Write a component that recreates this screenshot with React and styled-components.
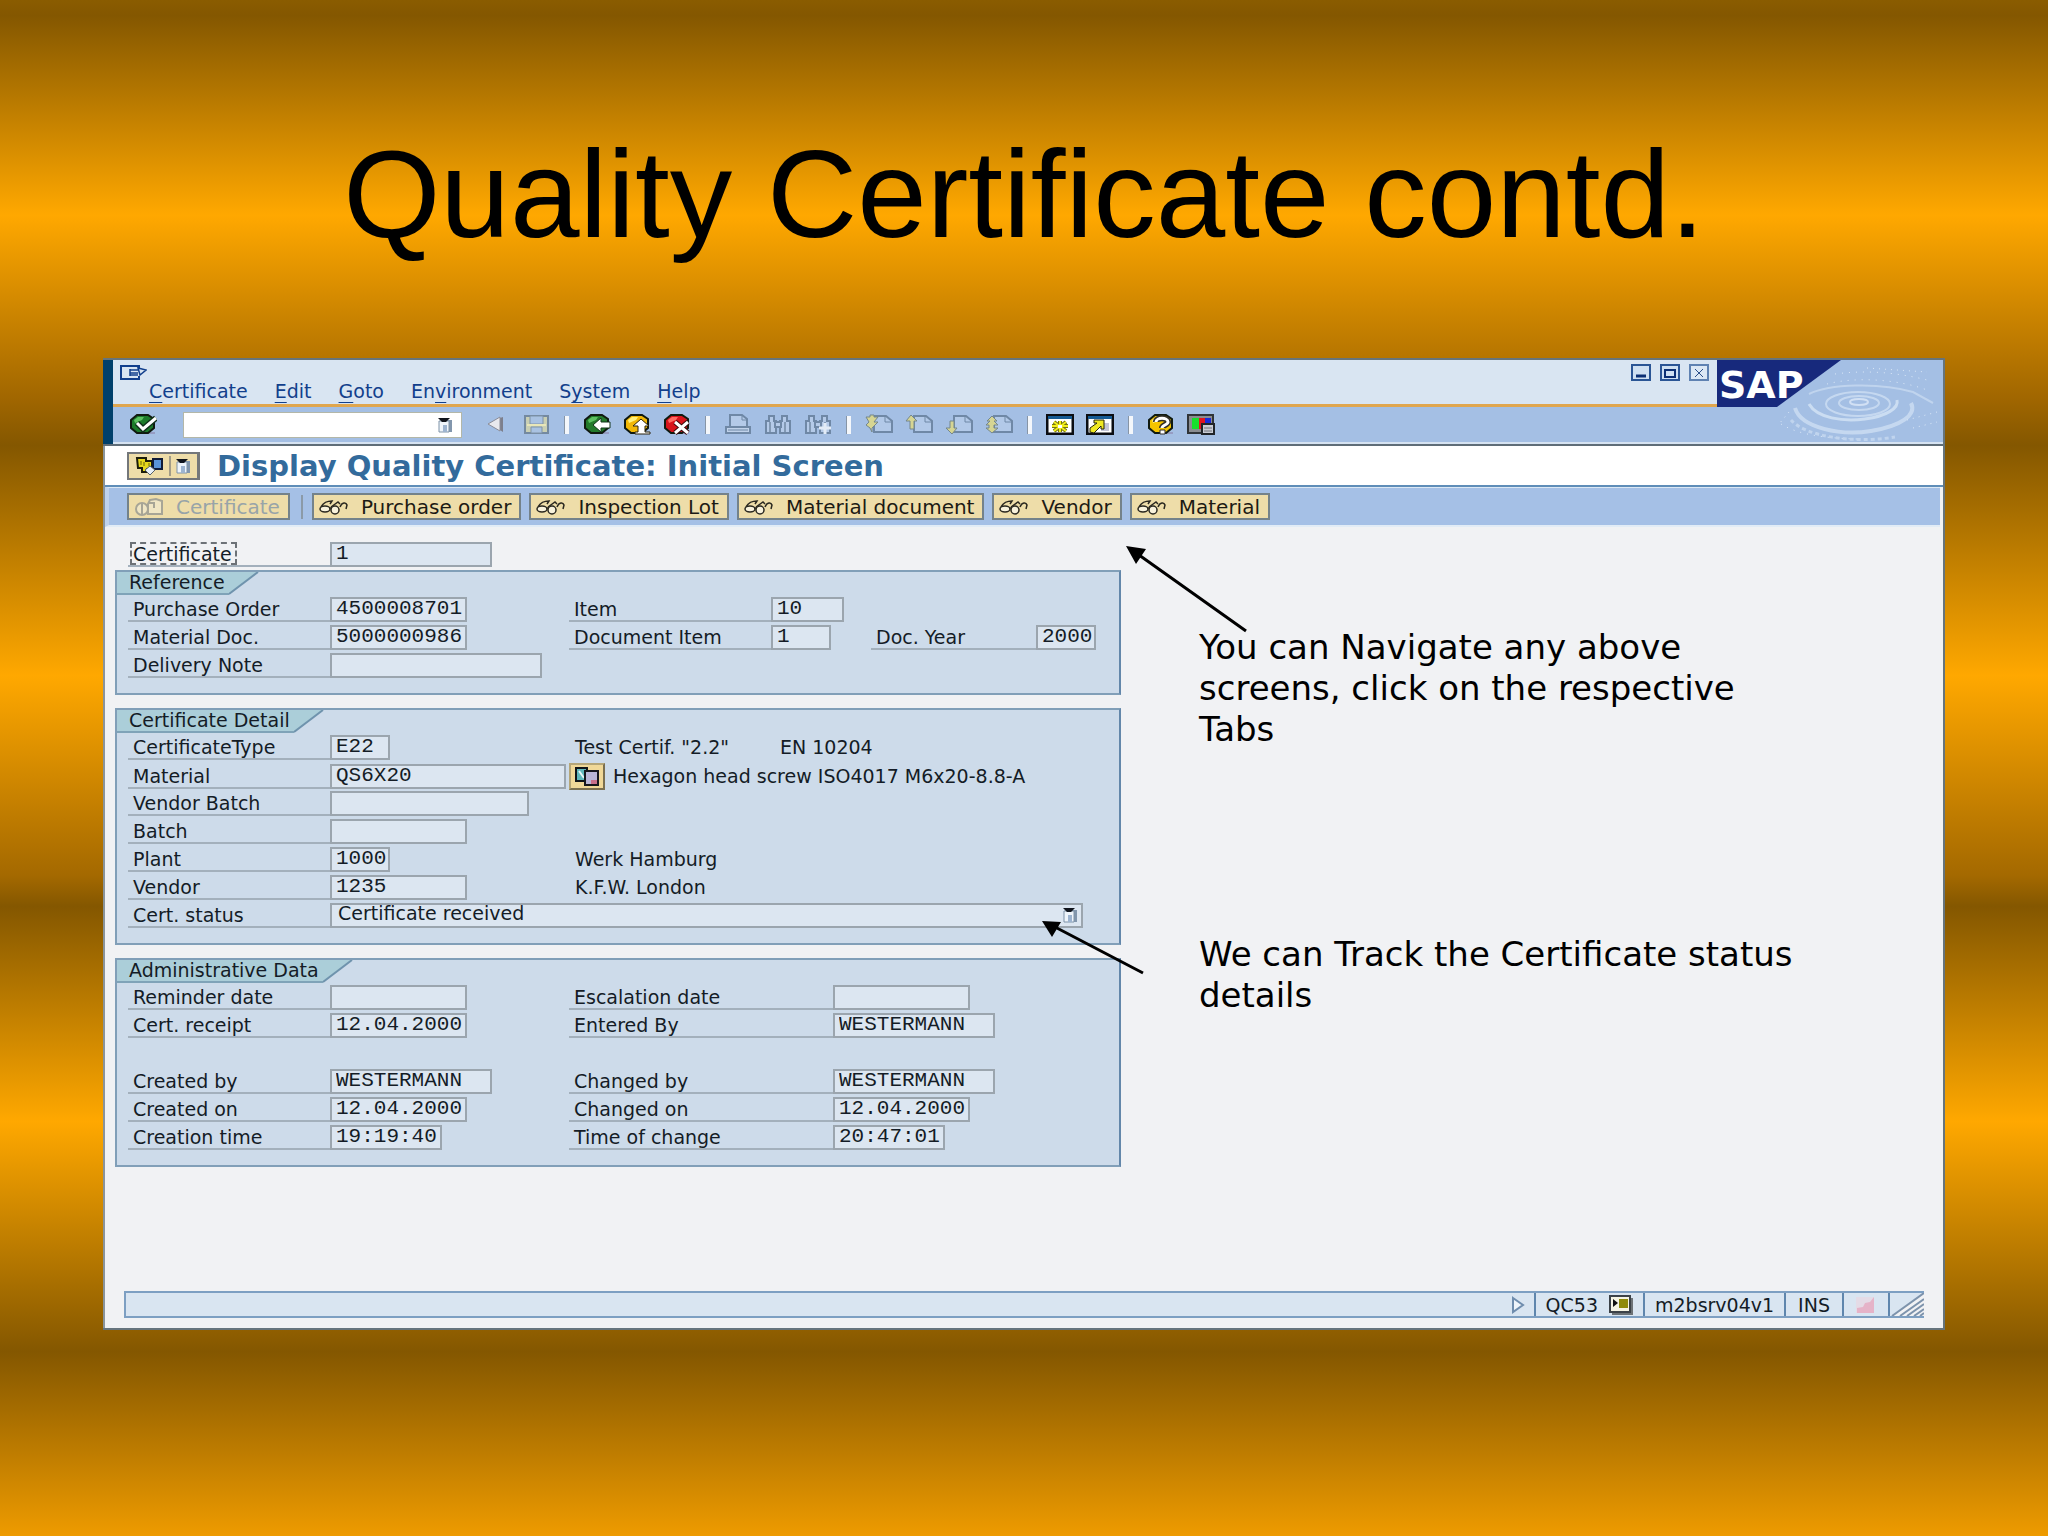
import React from "react";
import styled, { createGlobalStyle } from "styled-components";

const GlobalStyle = createGlobalStyle`
  * { box-sizing: border-box; }
  body { margin: 0; background: #845700; }
  button, input, select { margin: 0; font: inherit; color: inherit; }
`;

const Slide = styled.main`
  min-height: 100vh;
  padding: 122px 103px 206px;
  font-family: "DejaVu Sans", Verdana, sans-serif;
  font-size: 19px;
  color: #141c26;
  background: linear-gradient(
    to bottom,
    #8a5c00 0%, #845700 1%, #ffa800 14%, #a06600 26%, #845700 29%,
    #ffa800 44%, #a46900 57%, #845700 59%, #ffa800 73%, #845700 88%, #ee9b00 100%
  );
`;
const SlideTitle = styled.h1`
  margin: 0 0 92px;
  font-family: "Liberation Sans", Arial, sans-serif;
  font-size: 125px;
  font-weight: normal;
  line-height: 144px;
  text-align: center;
  color: #000;
`;
const Window = styled.section`
  border: 2px solid #66747c;
  border-left: none;
  background: #f1f2f4;
`;

/* header */
const Header = styled.header`
  display: flex;
  border-bottom: 2px solid #5f6d78;
`;
const Strip = styled.div`
  width: 10px;
  background: #00406b;
`;
const HeaderMain = styled.div`
  flex: 1;
`;
const MenuArea = styled.div`
  display: flex;
  justify-content: space-between;
  height: 47px;
  padding: 4px 8px 0 6px;
  background: #d9e5f2;
  border-bottom: 3px solid #e0a64e;
`;
const Menu = styled.nav`
  display: flex;
  flex-wrap: wrap;
  gap: 27px;
  padding-left: 30px;
`;
const MenuLink = styled.a`
  line-height: 20px;
  color: #123f8c;
  text-decoration: none;
  u { text-underline-offset: 4px; }
`;
const WindowButtons = styled.div`
  display: flex;
  gap: 9px;
`;
const IconButton = styled.button`
  display: block;
  width: ${(p) => p.$w || 28}px;
  height: ${(p) => p.$h || 21}px;
  padding: 0;
  border: none;
  background: none;
  svg { display: block; width: 100%; height: 100%; }
`;
const Toolbar = styled.div`
  display: flex;
  align-items: center;
  gap: 12px;
  height: 37px;
  padding-left: 16px;
  background: #a4bfe4;
  border-bottom: 2px solid #d6e3f2;
`;
const CommandBox = styled.div`
  display: flex;
  align-items: center;
  width: 279px;
  height: 26px;
  margin: 0 8px 0 14px;
  padding-right: 8px;
  background: #fff;
  border: 1px solid #b3b7a8;
`;
const CommandInput = styled.input`
  flex: 1;
  min-width: 0;
  height: 22px;
  border: none;
  background: none;
`;
const Separator = styled.span`
  width: 9px;
  height: 18px;
  border-left: 2px solid transparent;
  &::before {
    content: "";
    display: block;
    width: 4px;
    height: 100%;
    background: #f4f7fb;
    border-left: 1px solid #8795a6;
  }
`;
const Brand = styled.div`
  width: 226px;
  background: #a4bfe4;
  border-bottom: 2px solid #d6e3f2;
  svg { display: block; }
`;

/* title and application buttons */
const Screen = styled.div`
  display: flow-root;
  border-left: 2px solid #8a949a;
`;
const TitleBar = styled.div`
  display: flex;
  align-items: center;
  gap: 17px;
  height: 41px;
  padding-left: 22px;
  background: #fff;
  border-bottom: 2px solid #5f8db8;
`;
const ServiceButton = styled.button`
  display: flex;
  align-items: center;
  justify-content: space-between;
  width: 73px;
  height: 28px;
  padding: 0 6px;
  border: 2px solid #74777a;
  border-right-width: 3px;
  background: #eedda9;
`;
const ScreenTitle = styled.h2`
  margin: 0;
  font-size: 29px;
  line-height: 34px;
  color: #336b9c;
`;
const ButtonBar = styled.div`
  display: flex;
  align-items: center;
  gap: 8px;
  height: 40px;
  margin-right: 3px;
  padding-left: 18px;
  background: #a5c0e6;
  border-top: 1px solid #dce8f4;
  border-left: 4px solid #bfd2ec;
  border-bottom: 2px solid #e2ecf6;
`;
const AppButton = styled.button`
  display: flex;
  align-items: center;
  gap: 12px;
  height: 27px;
  padding: 0 8px 0 5px;
  font-size: 20px;
  line-height: 22px;
  white-space: nowrap;
  border: 2px solid #74828a;
  background: #eedda9;
  color: #1c1a14;
  &:disabled { color: #98a4a8; }
`;
const BarDivider = styled.span`
  width: 2px;
  height: 24px;
  margin: 0 1px 0 3px;
  background: #8b9aa8;
`;

/* form */
const Content = styled.div`
  position: relative;
  display: flex;
  min-height: 764px;
  padding: 15px 0 0 10px;
  background: #f1f2f4;
`;
const FormColumn = styled.form`
  display: flex;
  flex-direction: column;
  gap: 13px;
  flex: 0 1 1006px;
`;
const HeadGroup = styled.div`
  display: flex;
  flex-direction: column;
  gap: 3px;
`;
const HeadRow = styled.div`
  display: flex;
  padding-left: 13px;
`;
const Panel = styled.fieldset`
  margin: 0;
  padding: 0 0 15px;
  border: 2px solid #819fb8;
  border-right-color: #6387aa;
  background: #cddbea;
`;
const Tab = styled.div`
  display: flex;
  height: 23px;
  margin-bottom: 2px;
  svg { display: block; }
`;
const TabText = styled.span`
  padding: 0 4px 0 12px;
  line-height: 21px;
  background: #abced9;
  border-bottom: 2px solid #7fa3b8;
`;
const Rows = styled.div`
  display: grid;
  gap: 3px;
  padding-left: 11px;
`;
const Row = styled.div`
  display: grid;
  grid-template-columns: ${(p) => (p.$single ? "1fr" : "441px 1fr")};
  height: 25px;
`;
const Cell = styled.div`
  display: flex;
  align-items: center;
`;
const Label = styled.label`
  flex: none;
  width: ${(p) => p.$w || 202}px;
  height: 25px;
  margin-left: ${(p) => p.$gap || 0}px;
  padding-left: 5px;
  line-height: 24px;
  white-space: nowrap;
  border-bottom: 2px solid #a3b0bc;
`;
const FocusMark = styled.span`
  display: block;
  width: 107px;
  height: 23px;
  margin-left: -3px;
  padding-left: 1px;
  line-height: 20px;
  border: 2px dashed #6d7277;
`;
const Field = styled.input`
  width: ${(p) => p.$w}px;
  height: 25px;
  padding: 0 0 2px 4px;
  font-family: "Liberation Mono", "Courier New", monospace;
  font-size: 21px;
  border: 2px solid #9ba5ae;
  border-radius: 0;
  background: #dce6f1;
`;
const StatusSelect = styled.div`
  position: relative;
  width: 753px;
  svg { position: absolute; top: 4px; right: 5px; pointer-events: none; }
`;
const Select = styled.select`
  display: block;
  width: 100%;
  height: 25px;
  padding: 0 6px 4px;
  line-height: 17px;
  appearance: none;
  border: 2px solid #9ba5ae;
  border-radius: 0;
  background: #dce6f1;
`;
const Info = styled.span`
  min-width: ${(p) => p.$w || 0}px;
  padding: 0 0 2px 6px;
  white-space: nowrap;
`;
const MatchButton = styled.button`
  flex: none;
  width: 36px;
  height: 27px;
  margin-right: 2px;
  padding: 0;
  border: 2px solid #7a6f50;
  border-top-color: #b5a678;
  border-left-color: #b5a678;
  background: #f0d898;
  svg { display: block; }
`;

/* notes beside the form */
const Notes = styled.aside`
  display: flex;
  flex-direction: column;
  gap: 184px;
  width: 690px;
  padding: 85px 0 0 78px;
`;
const Note = styled.p`
  margin: 0;
  font-size: 34px;
  line-height: 41px;
  color: #000;
`;
const Arrows = styled.svg`
  position: absolute;
  top: 0;
  left: 0;
  pointer-events: none;
`;

/* status bar */
const StatusBar = styled.footer`
  display: flex;
  height: 27px;
  margin: 0 19px 10px;
  background: #d9e5f1;
  border: 2px solid #7d9fc2;
  border-right: none;
`;
const StatusItem = styled.div`
  display: flex;
  align-items: center;
  gap: 11px;
  padding: 0 ${(p) => p.$pad}px;
  border-left: 2px solid #5f86ad;
  svg { display: block; }
`;
const StatusMessage = styled.div`
  display: flex;
  flex: 1;
  align-items: center;
  justify-content: flex-end;
  padding-right: 9px;
`;
const Grip = styled.div`
  border-left: 2px solid #5f86ad;
  background: #d9e5f1;
  svg { display: block; }
`;

const Svg = ({ w = 28, h = 21, children }) => (
  <svg width={w} height={h} viewBox={`0 0 ${w} ${h}`} aria-hidden="true">
    {children}
  </svg>
);

const ListIcon = () => (
  <Svg w={16} h={16}>
    <path d="M4 3h11v12H4z" fill="#8296ad" />
    <path d="M2 4h10v11H2z" fill="#eef4fa" stroke="#7f93a8" strokeWidth="1" />
    <path d="M1 1h12L9 5H5z" fill="#10141c" />
    <path d="M6 8h4v7H6z" fill="#9db4d0" />
  </Svg>
);

const Glasses = () => (
  <Svg w={30} h={18}>
    <g fill="none" stroke="#2a2820" strokeWidth="1.5">
      <path d="M2 9C5 4 8 3 13 3l-2 3M12 9l7-5 2 2M21 9c2-5 6-5 7-2l-1 4" />
      <ellipse cx="6" cy="11" rx="5" ry="3" fill="#f8f2dc" />
      <ellipse cx="16" cy="12" rx="4" ry="4" fill="#f8f2dc" />
      <path d="M10 10h3" />
    </g>
  </Svg>
);

const Ball = ({ color, light, children }) => (
  <Svg>
    <path d="M8 18h18v2H10z" fill="#8d86ae" opacity=".6" />
    <path d="M8 1h11l6 4v9l-6 5H8l-6-5V6z" fill={color} stroke="#101a10" strokeWidth="2" />
    <path d="M5 6l4-3h6l-2 3-7 3z" fill={light} />
    {children}
  </Svg>
);

const OkIcon = () => (
  <Ball color="#1c7a2a" light="#5cc060">
    <path d="M8 9l6 6L27 4" fill="none" stroke="#10301a" strokeWidth="6" />
    <path d="M8 9l6 6L27 4" fill="none" stroke="#fff" strokeWidth="3" />
  </Ball>
);
const BackIcon = () => (
  <Ball color="#237a2b" light="#5cc060">
    <path d="M10 11l8-7v4h9v6h-9v4z" fill="#fff" stroke="#12351a" strokeWidth="1" />
  </Ball>
);
const ExitIcon = () => (
  <Ball color="#f2b705" light="#fff07a">
    <path d="M18 5l8 7h-4v6h5v2H12v-2h3v-6h-5z" fill="#fff" stroke="#2a220a" strokeWidth="1" />
  </Ball>
);
const CancelIcon = () => (
  <Ball color="#d8141c" light="#ff6a62">
    <path d="M12 8l13 11M25 8L12 19" stroke="#3a0a0c" strokeWidth="5" />
    <path d="M12 8l13 11M25 8L12 19" stroke="#fff" strokeWidth="3" />
  </Ball>
);
const HelpIcon = () => (
  <Ball color="#f5c400" light="#fff28a">
    <path d="M9 8c0-5 12-5 12 0 0 3-6 3-6 6" fill="none" stroke="#33302a" strokeWidth="6" />
    <path d="M9 8c0-5 12-5 12 0 0 3-6 3-6 6" fill="none" stroke="#fff" strokeWidth="3" />
    <path d="M13 16h5v4h-5z" fill="#fff" stroke="#33302a" strokeWidth="1" />
  </Ball>
);
const EnterIcon = () => (
  <Svg>
    <path d="M18 4l3-1v15l-3-2z" fill="#7d7f8c" />
    <path d="M6 10l12-7v14z" fill="#e9e9ee" stroke="#8a8c98" strokeWidth="1" />
  </Svg>
);
const SaveIcon = () => (
  <Svg>
    <path d="M3 2h23v17H3z" fill="#c9cfb4" stroke="#7489a0" strokeWidth="2" />
    <path d="M8 2h13v8H8zM9 13h11v6H9z" fill="#a9c2e2" stroke="#7f93a8" strokeWidth="1" />
    <path d="M5 11h19" stroke="#e8e6b8" strokeWidth="2" />
  </Svg>
);
const PrintIcon = () => (
  <Svg>
    <path d="M6 13V1h12l5 4v8" fill="#b4cae8" stroke="#6f88a6" strokeWidth="2" />
    <path d="M18 1v5h5" fill="none" stroke="#6f88a6" strokeWidth="1" />
    <path d="M2 13h24v6H2z" fill="#c0d2ea" stroke="#6f88a6" strokeWidth="2" />
    <path d="M4 16h20" stroke="#6f88a6" strokeWidth="1" />
  </Svg>
);
const FindIcon = ({ plus }) => (
  <Svg>
    <g fill="#b4cae8" stroke="#6f88a6" strokeWidth="2">
      <path d="M2 19V7h3V2h5v5h2v12zM16 19V7h2V2h5v5h3v12z" />
      <path d="M11 8h6v5h-6z" />
    </g>
    <path d="M6 8v10M21 8v10" stroke="#8299b4" strokeWidth="2" />
    {plus && <path d="M21 9v11M15 14h12" stroke="#e2ebf6" strokeWidth="3" />}
  </Svg>
);
const PageIcon = ({ arrow }) => (
  <Svg>
    <path d="M9 2h12l6 5v11H9z" fill="#b2c9e8" stroke="#6f88a6" strokeWidth="2" />
    <path d="M20 2v6h6" fill="none" stroke="#6f88a6" strokeWidth="1" />
    <path d={arrow} fill="#d6d592" stroke="#75878c" strokeWidth="1" />
  </Svg>
);
const SessionIcon = () => (
  <Svg>
    <path d="M1 1h26v19H1z" fill="#fff" stroke="#0b0d12" strokeWidth="3" />
    <path d="M2 2h24v3H2z" fill="#145a94" />
    <path d="M14 7v11M6 12h16M8 8l12 9M20 8L8 17" stroke="#77760c" strokeWidth="4" />
    <path d="M14 7v11M6 12h16M8 8l12 9M20 8L8 17" stroke="#f2ee1c" strokeWidth="2" />
    <path d="M12 11h4v3h-4z" fill="#fff" />
  </Svg>
);
const ShortcutIcon = () => (
  <Svg>
    <path d="M1 1h26v19H1z" fill="#fff" stroke="#0b0d12" strokeWidth="3" />
    <path d="M2 2h24v3H2z" fill="#145a94" />
    <path d="M15 9h8v8h-8z" fill="#c4c6d8" />
    <path d="M4 18v-4l7-5H8V6h10v9h-3v-3l-7 7z" fill="#efe822" stroke="#24240a" strokeWidth="1" />
  </Svg>
);
const LayoutIcon = () => (
  <Svg>
    <path d="M1 1h25v18H1z" fill="#8a8c90" stroke="#303438" strokeWidth="2" />
    <path d="M5 4h7v11H5z" fill="#16e02c" />
    <path d="M12 4h6v11h-6z" fill="#e01420" />
    <path d="M18 4h6v7h-6z" fill="#1a28d8" />
    <path d="M15 10h12v10H15z" fill="#c9ccd4" stroke="#202428" strokeWidth="2" />
    <path d="M17 14h8M17 17h8" stroke="#70757c" strokeWidth="1" />
  </Svg>
);

const Logo = () => (
  <svg width="226" height="82" viewBox="0 0 226 82" role="img" aria-label="SAP">
    <g fill="none" stroke="#dce9f8" strokeWidth="2">
      <ellipse cx="142" cy="42" rx="9" ry="3" opacity=".8" />
      <ellipse cx="142" cy="43" rx="20" ry="7" opacity=".6" />
      <ellipse cx="141" cy="44" rx="32" ry="12" opacity=".6" />
      <path d="M78 48c6 20 46 28 76 23s46-16 40-28" strokeWidth="4" opacity=".6" />
      <path d="M92 44c8 14 34 18 56 15s34-11 32-19" strokeWidth="3" opacity=".7" />
      <path d="M92 34c20-10 70-12 104-2l20 11" opacity=".5" />
      <path d="M74 60c14 16 60 24 104 17" strokeWidth="3" strokeDasharray="4 3" opacity=".5" />
      <path d="M110 24c30-8 74-4 100 6M118 14c30-4 60-2 92 6M64 64c16 10 40 14 76 15" strokeWidth="1" strokeDasharray="1 6" />
      <path d="M190 60l30-8M196 68l24-6M150 8l60 4M72 52l-10 12" strokeWidth="1" strokeDasharray="1 5" />
    </g>
    <path d="M0 0h124L60 47H0z" fill="#17297c" />
    <text x="2" y="38" fill="#fff" fontFamily="DejaVu Sans, sans-serif" fontWeight="bold" fontSize="38">SAP</text>
  </svg>
);

const MENU = [
  ["", "C", "ertificate"],
  ["", "E", "dit"],
  ["", "G", "oto"],
  ["En", "v", "ironment"],
  ["S", "y", "stem"],
  ["", "H", "elp"],
];

const TOOLS = [
  ["Enter", <EnterIcon />],
  ["Save", <SaveIcon />],
  null,
  ["Back", <BackIcon />],
  ["Exit", <ExitIcon />],
  ["Cancel", <CancelIcon />],
  null,
  ["Print", <PrintIcon />],
  ["Find", <FindIcon />],
  ["Find next", <FindIcon plus />],
  null,
  ["First page", <PageIcon arrow="M1 3h4V1h4v2h4L9 8h4l-6 6 0 4-2-4-4-3 3-3z" />],
  ["Previous page", <PageIcon arrow="M6 1l6 6H9v8H5V7H1z" />],
  ["Next page", <PageIcon arrow="M5 7h4v7h3l-5 6-6-6h4z" />],
  ["Last page", <PageIcon arrow="M7 2l5 5H9l4 4H9v3h4l-6 5-6-5h3v-3H1l4-4H2z" />],
  null,
  ["Create new session", <SessionIcon />],
  ["Generate shortcut", <ShortcutIcon />],
  null,
  ["Help", <HelpIcon />],
  ["Customize local layout", <LayoutIcon />],
];

const APP_BUTTONS = ["Purchase order", "Inspection Lot", "Material document", "Vendor", "Material"];

const Entry = ({ id, label, value = "", w, labelW, gap }) => (
  <>
    <Label htmlFor={id} $w={labelW} $gap={gap}>{label}</Label>
    <Field id={id} $w={w} value={value} readOnly />
  </>
);

const Group = ({ title, children }) => (
  <Panel aria-label={title}>
    <Tab>
      <TabText>{title}</TabText>
      <Svg w={30} h={23}>
        <path d="M0 0h29L1 22H0z" fill="#abced9" />
        <path d="M29 0L0 22" stroke="#6f93ad" strokeWidth="2" />
      </Svg>
    </Tab>
    <Rows>{children}</Rows>
  </Panel>
);

const App = () => {
  return (
    <>
      <GlobalStyle />
      <Slide>
        <SlideTitle>Quality Certificate contd.</SlideTitle>
        <Window>
          <Header>
            <Strip />
            <HeaderMain>
              <MenuArea>
                <div>
                  <IconButton $w={28} $h={17} aria-label="Window menu">
                    <Svg w={28} h={17}>
                      <path d="M20 5V2H2v13h18v-3" fill="none" stroke="#123f8c" strokeWidth="2" />
                      <path d="M11 5v7M11 6h9M11 11h8M11 9h8M19 4l8 2-6 5z" fill="#d9e5f2" stroke="#123f8c" strokeWidth="1.5" />
                    </Svg>
                  </IconButton>
                  <Menu>
                    {MENU.map(([before, key, after]) => (
                      <MenuLink href="#" key={after}>{before}<u>{key}</u>{after}</MenuLink>
                    ))}
                  </Menu>
                </div>
                <WindowButtons>
                  <IconButton $w={20} $h={17} aria-label="Minimize">
                    <Svg w={20} h={17}>
                      <path d="M1 1h18v15H1z" fill="#cfe0f2" stroke="#2a5595" strokeWidth="2" />
                      <path d="M5 12h10" stroke="#0b2f74" strokeWidth="3" />
                    </Svg>
                  </IconButton>
                  <IconButton $w={20} $h={17} aria-label="Maximize">
                    <Svg w={20} h={17}>
                      <path d="M1 1h18v15H1z" fill="#cfe0f2" stroke="#2a5595" strokeWidth="2" />
                      <path d="M5 6h10v7H5z" fill="none" stroke="#0b2f74" strokeWidth="2" />
                    </Svg>
                  </IconButton>
                  <IconButton $w={20} $h={17} aria-label="Close">
                    <Svg w={20} h={17}>
                      <path d="M1 1h18v15H1z" fill="#dce8f5" stroke="#5f82b2" strokeWidth="2" />
                      <path d="M6 5l8 8M14 5l-8 8" stroke="#2c4f8a" strokeWidth="1" />
                    </Svg>
                  </IconButton>
                </WindowButtons>
              </MenuArea>
              <Toolbar>
                <IconButton aria-label="Continue"><OkIcon /></IconButton>
                <CommandBox>
                  <CommandInput aria-label="Command" />
                  <ListIcon />
                </CommandBox>
                {TOOLS.map((tool, i) =>
                  tool ? (
                    <IconButton key={i} aria-label={tool[0]}>{tool[1]}</IconButton>
                  ) : (
                    <Separator key={i} />
                  )
                )}
              </Toolbar>
            </HeaderMain>
            <Brand><Logo /></Brand>
          </Header>
          <Screen>
            <TitleBar>
              <ServiceButton aria-label="Services for object">
                <Svg w={30} h={20}>
                  <path d="M2 2h9v3h6v8h-5v3H7v-4H3z" fill="#e6d81e" stroke="#1c1c0c" strokeWidth="2" />
                  <path d="M18 3h9v10h-9z" fill="#5a94d8" stroke="#101c38" strokeWidth="2" />
                  <path d="M15 10l5 4-5 5-5-5z" fill="#e8f0f8" stroke="#56606c" strokeWidth="1" />
                  <path d="M6 5v4M9 6v4M14 7v3" stroke="#6a6408" strokeWidth="1" />
                </Svg>
                <Svg w={2} h={20}><path d="M0 0h2v20H0z" fill="#a29c88" /></Svg>
                <ListIcon />
              </ServiceButton>
              <ScreenTitle>Display Quality Certificate: Initial Screen</ScreenTitle>
            </TitleBar>
            <ButtonBar>
              <AppButton disabled>
                <Svg w={30} h={20}>
                  <g fill="#f0e6c4" stroke="#a7a596" strokeWidth="2">
                    <ellipse cx="8" cy="12" rx="6" ry="6" />
                    <path d="M8 6v12M16 3l6-1 6 2v13H14V7z" />
                    <path d="M14 6h6v5" fill="none" />
                  </g>
                </Svg>
                Certificate
              </AppButton>
              <BarDivider />
              {APP_BUTTONS.map((name) => (
                <AppButton key={name}><Glasses />{name}</AppButton>
              ))}
            </ButtonBar>
            <Content>
              <FormColumn>
                <HeadGroup>
                  <HeadRow>
                    <Label htmlFor="certificate"><FocusMark>Certificate</FocusMark></Label>
                    <Field id="certificate" $w={162} value="1" readOnly />
                  </HeadRow>
                  <Group title="Reference">
                    <Row>
                      <Cell><Entry id="po" label="Purchase Order" value="4500008701" w={137} /></Cell>
                      <Cell><Entry id="item" label="Item" value="10" w={73} /></Cell>
                    </Row>
                    <Row>
                      <Cell><Entry id="matdoc" label="Material Doc." value="5000000986" w={137} /></Cell>
                      <Cell>
                        <Entry id="docitem" label="Document Item" value="1" w={60} />
                        <Entry id="docyear" label="Doc. Year" value="2000" w={60} labelW={165} gap={40} />
                      </Cell>
                    </Row>
                    <Row>
                      <Cell><Entry id="delivery" label="Delivery Note" w={212} /></Cell>
                    </Row>
                  </Group>
                </HeadGroup>
                <Group title="Certificate Detail">
                  <Row>
                    <Cell><Entry id="certtype" label="CertificateType" value="E22" w={60} /></Cell>
                    <Cell><Info $w={205}>Test Certif. "2.2"</Info><Info>EN 10204</Info></Cell>
                  </Row>
                  <Row>
                    <Cell><Entry id="material" label="Material" value="QS6X20" w={236} /></Cell>
                    <Cell>
                      <MatchButton type="button" aria-label="Display material">
                        <Svg w={32} h={23}>
                          <path d="M5 3h11v13H5z" fill="#5fb8bc" stroke="#101418" strokeWidth="2" />
                          <path d="M8 6l5 7" stroke="#e8f6f6" strokeWidth="2" />
                          <path d="M14 6h13v14H14z" fill="#b9b6d6" stroke="#16181e" strokeWidth="2" />
                          <path d="M20 15h6v4h-6z" fill="#c8708c" />
                        </Svg>
                      </MatchButton>
                      <Info>Hexagon head screw ISO4017 M6x20-8.8-A</Info>
                    </Cell>
                  </Row>
                  <Row><Cell><Entry id="vbatch" label="Vendor Batch" w={199} /></Cell></Row>
                  <Row><Cell><Entry id="batch" label="Batch" w={137} /></Cell></Row>
                  <Row>
                    <Cell><Entry id="plant" label="Plant" value="1000" w={60} /></Cell>
                    <Cell><Info>Werk Hamburg</Info></Cell>
                  </Row>
                  <Row>
                    <Cell><Entry id="vendor" label="Vendor" value="1235" w={137} /></Cell>
                    <Cell><Info>K.F.W. London</Info></Cell>
                  </Row>
                  <Row $single>
                    <Cell>
                      <Label htmlFor="status">Cert. status</Label>
                      <StatusSelect>
                        <Select id="status" defaultValue="received">
                          <option value="received">Certificate received</option>
                        </Select>
                        <ListIcon />
                      </StatusSelect>
                    </Cell>
                  </Row>
                </Group>
                <Group title="Administrative Data">
                  <Row>
                    <Cell><Entry id="reminder" label="Reminder date" w={137} /></Cell>
                    <Cell><Entry id="escalation" label="Escalation date" w={137} labelW={264} /></Cell>
                  </Row>
                  <Row>
                    <Cell><Entry id="receipt" label="Cert. receipt" value="12.04.2000" w={137} /></Cell>
                    <Cell><Entry id="enteredby" label="Entered By" value="WESTERMANN" w={162} labelW={264} /></Cell>
                  </Row>
                  <Row />
                  <Row>
                    <Cell><Entry id="createdby" label="Created by" value="WESTERMANN" w={162} /></Cell>
                    <Cell><Entry id="changedby" label="Changed by" value="WESTERMANN" w={162} labelW={264} /></Cell>
                  </Row>
                  <Row>
                    <Cell><Entry id="createdon" label="Created on" value="12.04.2000" w={137} /></Cell>
                    <Cell><Entry id="changedon" label="Changed on" value="12.04.2000" w={137} labelW={264} /></Cell>
                  </Row>
                  <Row>
                    <Cell><Entry id="ctime" label="Creation time" value="19:19:40" w={112} /></Cell>
                    <Cell><Entry id="chtime" label="Time of change" value="20:47:01" w={112} labelW={264} /></Cell>
                  </Row>
                </Group>
              </FormColumn>
              <Notes>
                <Note>You can Navigate any above screens, click on the respective Tabs</Note>
                <Note>We can Track the Certificate status details</Note>
              </Notes>
              <Arrows width="1200" height="500" viewBox="0 0 1200 500" aria-hidden="true">
                <path d="M1141 104L1034 28M1038 446L950 400" stroke="#000" strokeWidth="3" />
                <path d="M1021 19l20 3-10 15zM937 394l19 1-9 15z" fill="#000" />
              </Arrows>
            </Content>
            <StatusBar>
              <StatusMessage>
                <Svg w={14} h={18}>
                  <path d="M2 2l10 7-10 7z" fill="#eef4fa" stroke="#6f8dae" strokeWidth="2" />
                </Svg>
              </StatusMessage>
              <StatusItem $pad={10}>
                QC53
                <Svg w={24} h={20}>
                  <path d="M3 3h21v17H3z" fill="#6c7276" />
                  <path d="M1 1h20v16H1z" fill="#f6f4e4" stroke="#3c4248" strokeWidth="2" />
                  <path d="M4 4l5 4-5 4z" fill="#101010" />
                  <path d="M10 4h9v9h-9z" fill="#8f8a0a" />
                </Svg>
              </StatusItem>
              <StatusItem $pad={10}>m2bsrv04v1</StatusItem>
              <StatusItem $pad={12}>INS</StatusItem>
              <StatusItem $pad={12}>
                <Svg w={20} h={18}>
                  <path d="M0 1v16h18V1z" fill="#e4dbe6" />
                  <path d="M1 17v-5l6-1 2-4 5-1 4-5v16z" fill="#e5b3c8" />
                </Svg>
              </StatusItem>
              <Grip>
                <Svg w={34} h={23}>
                  <path d="M34 0v23H2z" fill="#f1f2f4" />
                  <path d="M2 23L34 0M10 23L34 6M17 23L34 11M24 23L34 16M30 23l4-3" stroke="#7d93ac" strokeWidth="2" />
                </Svg>
              </Grip>
            </StatusBar>
          </Screen>
        </Window>
      </Slide>
    </>
  );
};

export default App;
